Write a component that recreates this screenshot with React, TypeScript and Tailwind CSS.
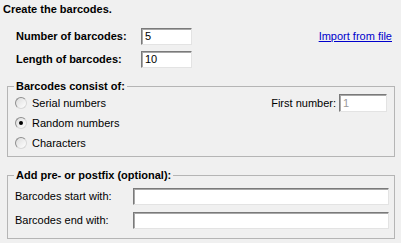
import React from 'react'

const font = { fontFamily: '"Liberation Sans", Arial, sans-serif' }

function TextBox({ value, className, disabled }: { value?: string; className: string; disabled?: boolean }) {
  return (
    <div
      className={`h-[17px] bg-white border border-t-[#7a7a7a] border-l-[#7a7a7a] border-r-[#e3e3e3] border-b-[#e3e3e3] shadow-[inset_1px_1px_0_#a8a8a8] pl-[3px] flex items-center text-[11px] leading-none ${
        disabled ? 'text-[#9a9a9a]' : 'text-black'
      } ${className}`}
    >
      {value}
    </div>
  )
}

function Radio({ label, checked }: { label: string; checked?: boolean }) {
  return (
    <div className="flex items-center h-[20px]">
      <div className="w-[12px] h-[12px] rounded-full border border-t-[#8e8e8e] border-l-[#8e8e8e] border-r-[#d8d8d8] border-b-[#d8d8d8] bg-gradient-to-br from-[#dcdcdc] to-white flex items-center justify-center ml-[7px]">
        {checked && <div className="w-[4px] h-[4px] rounded-full bg-black" />}
      </div>
      <span className="ml-[5px] text-[11px]">{label}</span>
    </div>
  )
}

export default function App() {
  return (
    <div style={font} className="w-[401px] h-[243px] bg-[#f0f0f0] text-black text-[11px] leading-[13px] overflow-hidden">
      <div className="pt-[3px] pl-[3px] font-bold">Create the barcodes.</div>

      <div className="mt-[9px] flex flex-col">
        <div className="flex items-center h-[23px]">
          <span className="ml-[16px] w-[125px] font-bold">Number of barcodes:</span>
          <TextBox value="5" className="w-[51px]" />
          <a className="ml-auto mr-[9px] text-[#0000cc] underline cursor-pointer">Import from file</a>
        </div>
        <div className="flex items-center h-[23px]">
          <span className="ml-[16px] w-[125px] font-bold">Length of barcodes:</span>
          <TextBox value="10" className="w-[51px]" />
        </div>
      </div>

      <fieldset className="ml-[7px] mt-[9px] w-[388px] border border-[#b5b5b5] pb-[3px]">
        <legend className="ml-[6px] px-[2px] font-bold">Barcodes consist of:</legend>
        <div className="flex items-center justify-between">
          <Radio label="Serial numbers" />
          <div className="flex items-center mr-[7px]">
            <span className="mr-[3px]">First number:</span>
            <TextBox value="1" disabled className="w-[48px] h-[18px]" />
          </div>
        </div>
        <Radio label="Random numbers" checked />
        <Radio label="Characters" />
      </fieldset>

      <fieldset className="ml-[7px] mt-[12px] w-[388px] border border-[#b5b5b5] pt-[2px] pb-[6px]">
        <legend className="ml-[6px] px-[2px] font-bold">Add pre- or postfix (optional):</legend>
        <div className="flex items-center h-[24px]">
          <span className="ml-[7px] w-[118px]">Barcodes start with:</span>
          <TextBox className="w-[256px]" />
        </div>
        <div className="flex items-center h-[24px]">
          <span className="ml-[7px] w-[118px]">Barcodes end with:</span>
          <TextBox className="w-[256px]" />
        </div>
      </fieldset>
    </div>
  )
}
